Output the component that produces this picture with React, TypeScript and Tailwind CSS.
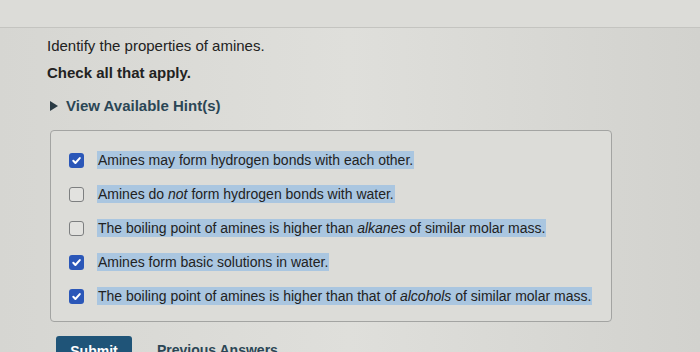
const OPTIONS: { checked: boolean; text: React.ReactNode }[] = [
  { checked: true, text: 'Amines may form hydrogen bonds with each other.' },
  {
    checked: false,
    text: (
      <>
        Amines do <i>not</i> form hydrogen bonds with water.
      </>
    ),
  },
  {
    checked: false,
    text: (
      <>
        The boiling point of amines is higher than <i>alkanes</i> of similar molar mass.
      </>
    ),
  },
  { checked: true, text: 'Amines form basic solutions in water.' },
  {
    checked: true,
    text: (
      <>
        The boiling point of amines is higher than that of <i>alcohols</i> of similar molar mass.
      </>
    ),
  },
];

function Checkbox({ checked }: { checked: boolean }) {
  if (checked) {
    return (
      <span className="w-[15px] h-[15px] rounded-[3px] bg-[#2b57b8] flex items-center justify-center shrink-0">
        <svg className="w-[11px] h-[11px]" viewBox="0 0 12 12" fill="none" stroke="white" strokeWidth={2.2}>
          <path strokeLinecap="round" strokeLinejoin="round" d="M2.5 6.3l2.3 2.4L9.6 3.4" />
        </svg>
      </span>
    );
  }
  return <span className="w-[15px] h-[15px] rounded-[3px] border-[1.5px] border-[#7d7f80] bg-[#e2e2df] shrink-0" />;
}

export default function App() {
  return (
    <div
      className="w-[700px] h-[352px] overflow-hidden bg-gradient-to-r from-[#d6d6d2] via-[#dfdfdb] to-[#d2d2ce] text-[#222]"
      style={{ fontFamily: '"Liberation Sans", Arial, sans-serif' }}
    >
      <div className="h-[28px] border-b border-[#c4c4c0] bg-[#dcdcd8]" />
      <div className="pl-[47px] pt-[9px]">
        <p className="text-[15px] leading-[18px]">Identify the properties of amines.</p>
        <p className="text-[15px] leading-[18px] font-bold mt-[9px]">Check all that apply.</p>
        <div className="flex items-center mt-[15px] ml-[3px] gap-[8px]">
          <svg className="w-[8px] h-[10px]" viewBox="0 0 8 10">
            <path d="M0 0L8 5L0 10z" fill="#2a3a44" />
          </svg>
          <span className="text-[15px] leading-[18px] font-bold text-[#2b4655]">View Available Hint(s)</span>
        </div>
        <div className="mt-[15px] ml-[3px] w-[562px] h-[192px] border-[1.5px] border-[#a3a4a2] rounded-[4px] bg-[#dcdcd8] pl-[18px] pt-[20px] flex flex-col gap-[16px]">
          {OPTIONS.map((opt, i) => (
            <div key={i} className="flex items-center gap-[13px] h-[18px]">
              <Checkbox checked={opt.checked} />
              <span className="text-[14px] leading-[18px] bg-[#aac6e0] px-[1px]">{opt.text}</span>
            </div>
          ))}
        </div>
        <div className="flex items-start mt-[14px] ml-[9px] gap-[25px]">
          <div className="w-[76px] h-[30px] rounded-[3px] bg-[#1f5478] text-white text-[14px] font-bold flex items-center justify-center">
            Submit
          </div>
          <span className="text-[14px] font-bold text-[#2b4655] mt-[4px]">Previous Answers</span>
        </div>
      </div>
    </div>
  );
}
